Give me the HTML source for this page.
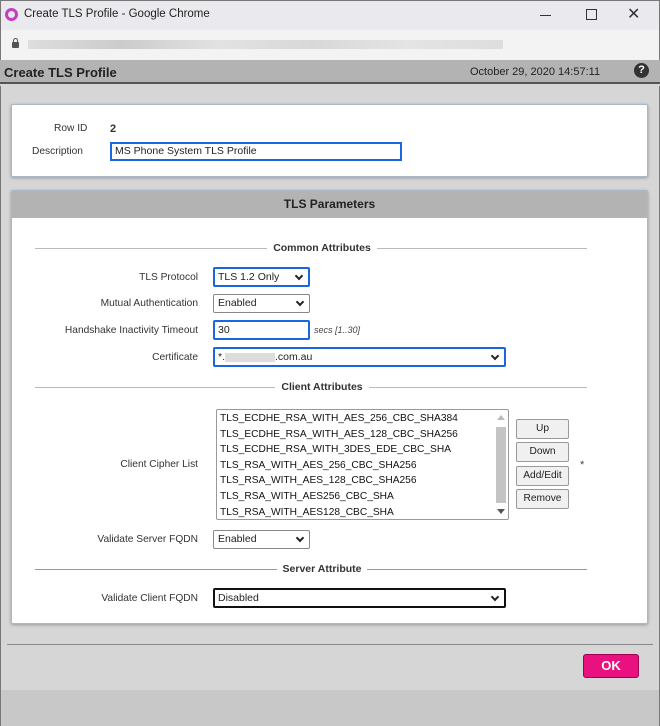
<!DOCTYPE html>
<html><head><meta charset="utf-8"><style>
*{box-sizing:border-box;margin:0;padding:0}
body{width:660px;height:726px;position:relative;background:#d6d6d6;font-family:"Liberation Sans","DejaVu Sans",sans-serif;font-size:11px;color:#222;overflow:hidden}
.a{position:absolute}
.lbl{position:absolute;text-align:right;width:200px;left:0;font-size:10.2px;color:#333}
.sel{position:absolute;background:#fff;border:1px solid #888;border-radius:2px;font-size:10.5px;padding:0 4px;line-height:17px}
.sel.f{border:2px solid #1a66e0;padding:0 3px;line-height:16px}
.chev{position:absolute;right:6px;top:4px;width:6px;height:6px;border-right:2px solid #222;border-bottom:2px solid #222;transform:rotate(45deg)}
.sec{position:absolute;left:35px;width:552px;height:1px;background:#bbb}
.sect{position:absolute;left:0;width:622px;text-align:center;font-weight:bold;font-size:10.5px;color:#333}
.sect span{background:#fff;padding:0 6px}
.btn{position:absolute;left:516px;width:53px;height:20px;border:1px solid #999;border-radius:2px;background:#f0f0f0;text-align:center;font-size:10.2px;line-height:18px}
</style></head><body>
<div class="a" style="left:0;top:0;width:660px;height:30px;background:#eaeaee;border:1px solid #777;border-bottom:none"></div>
<div class="a" style="left:5px;top:8px;width:13px;height:13px;border-radius:50%;border:3px solid #c040c0"></div>
<div class="a" style="left:24px;top:8px;font-size:11.5px;color:#222">Create TLS Profile - Google Chrome</div>
<div class="a" style="left:540px;top:15px;width:11px;height:1px;background:#333"></div>
<div class="a" style="left:586px;top:9px;width:11px;height:11px;border:1px solid #333"></div>
<div class="a" style="left:627px;top:4px;font-size:16px;color:#333">✕</div>
<div class="a" style="left:0;top:30px;width:660px;height:30px;background:#f3f3f3;border-left:1px solid #777;border-right:1px solid #777"></div>
<div class="a" style="left:12px;top:42px;width:7px;height:6px;background:#555;border-radius:1px"></div>
<div class="a" style="left:13px;top:38px;width:5px;height:5px;border:1px solid #555;border-bottom:none;border-radius:3px 3px 0 0"></div>
<div class="a" style="left:28px;top:40px;width:475px;height:9px;background:linear-gradient(90deg,#ddd,#ccc 20%,#e2e2e2 40%,#d8d8d8 60%,#e4e4e4 80%,#ddd)"></div>
<div class="a" style="left:0;top:60px;width:660px;height:24px;background:#b3b3b3;border-bottom:2px solid #555"></div>
<div class="a" style="left:4px;top:65px;font-size:13px;font-weight:bold;color:#222">Create TLS Profile</div>
<div class="a" style="left:470px;top:66px;font-size:11px;color:#222">October 29, 2020 14:57:11</div>
<div class="a" style="left:634px;top:63px;width:15px;height:15px;border-radius:50%;background:#333;color:#fff;font-weight:bold;font-size:11px;text-align:center;line-height:15px">?</div>
<div class="a" style="left:0;top:86px;width:1px;height:640px;background:#777"></div>
<div class="a" style="left:659px;top:86px;width:1px;height:640px;background:#777"></div>
<div class="a" style="left:11px;top:104px;width:637px;height:73px;background:#fff;border:1px solid #a8b8c8;border-radius:2px;box-shadow:0 1px 3px #999"></div>
<div class="a" style="left:54px;top:123px;color:#333;font-size:10.2px">Row ID</div>
<div class="a" style="left:110px;top:123px;font-weight:bold;color:#333">2</div>
<div class="a" style="left:32px;top:146px;color:#333;font-size:10.2px">Description</div>
<div class="a" style="left:110px;top:142px;width:292px;height:19px;border:2px solid #1a66e0;font-size:10.5px;padding:0 3px;line-height:15px;background:#fff">MS Phone System TLS Profile</div>
<div class="a" style="left:11px;top:190px;width:637px;height:434px;background:#fff;border:1px solid #a8b8c8;border-radius:2px;box-shadow:0 1px 3px #999;overflow:hidden">
 <div style="height:27px;background:#b3b3b3;text-align:center;font-weight:bold;font-size:12px;line-height:27px;color:#222">TLS Parameters</div>
</div>
<div class="sec" style="top:248px"></div>
<div class="sect" style="top:242px;left:11px"><span>Common Attributes</span></div>
<div class="lbl" style="top:272px;left:-2px">TLS Protocol</div>
<div class="sel f" style="left:213px;top:267px;width:97px;height:20px">TLS 1.2 Only<div class="chev"></div></div>
<div class="lbl" style="top:298px;left:-2px">Mutual Authentication</div>
<div class="sel" style="left:213px;top:294px;width:97px;height:19px">Enabled<div class="chev"></div></div>
<div class="lbl" style="top:325px;left:-2px">Handshake Inactivity Timeout</div>
<div class="sel f" style="left:213px;top:320px;width:97px;height:20px">30</div>
<div class="a" style="left:314px;top:325px;font-size:9px;font-style:italic;color:#444">secs [1..30]</div>
<div class="lbl" style="top:352px;left:-2px">Certificate</div>
<div class="sel f" style="left:213px;top:347px;width:293px;height:20px">*.<span style="display:inline-block;width:50px;height:9px;background:#ddd;vertical-align:middle"></span>.com.au<div class="chev"></div></div>
<div class="sec" style="top:387px"></div>
<div class="sect" style="top:381px;left:11px"><span>Client Attributes</span></div>
<div class="lbl" style="top:459px;left:-2px">Client Cipher List</div>
<div class="a" style="left:216px;top:409px;width:293px;height:111px;border:1px solid #999;border-radius:2px;background:#fff;font-size:10.2px;line-height:15.6px;padding:1px 3px;color:#111">
TLS_ECDHE_RSA_WITH_AES_256_CBC_SHA384<br>TLS_ECDHE_RSA_WITH_AES_128_CBC_SHA256<br>TLS_ECDHE_RSA_WITH_3DES_EDE_CBC_SHA<br>TLS_RSA_WITH_AES_256_CBC_SHA256<br>TLS_RSA_WITH_AES_128_CBC_SHA256<br>TLS_RSA_WITH_AES256_CBC_SHA<br>TLS_RSA_WITH_AES128_CBC_SHA
<div class="a" style="right:2px;top:17px;width:10px;height:76px;background:#c4c4c4"></div>
<div class="a" style="right:3px;top:5px;width:0;height:0;border:4px solid transparent;border-bottom:5px solid #bbb;border-top:none"></div>
<div class="a" style="right:3px;bottom:5px;width:0;height:0;border:4px solid transparent;border-top:5px solid #555;border-bottom:none"></div>
</div>
<div class="btn" style="top:419px">Up</div>
<div class="btn" style="top:442px">Down</div>
<div class="btn" style="top:466px">Add/Edit</div>
<div class="btn" style="top:489px">Remove</div>
<div class="a" style="left:580px;top:459px;color:#444">*</div>
<div class="lbl" style="top:534px;left:-2px">Validate Server FQDN</div>
<div class="sel" style="left:213px;top:530px;width:97px;height:19px">Enabled<div class="chev"></div></div>
<div class="sec" style="top:569px;background:#999"></div>
<div class="sect" style="top:563px;left:11px"><span>Server Attribute</span></div>
<div class="lbl" style="top:593px;left:-2px">Validate Client FQDN</div>
<div class="sel" style="left:213px;top:588px;width:293px;height:20px;border:2px solid #111;padding:0 3px;line-height:16px">Disabled<div class="chev"></div></div>
<div class="a" style="left:7px;top:644px;width:646px;height:1px;background:#888"></div>
<div class="a" style="left:583px;top:654px;width:56px;height:24px;background:#e8117f;border:1px solid #a00050;border-radius:3px;color:#fff;font-weight:bold;font-size:13px;text-align:center;line-height:22px">OK</div>
<div class="a" style="left:1px;top:690px;width:658px;height:36px;background:#c8c8c8"></div>
</body></html>
